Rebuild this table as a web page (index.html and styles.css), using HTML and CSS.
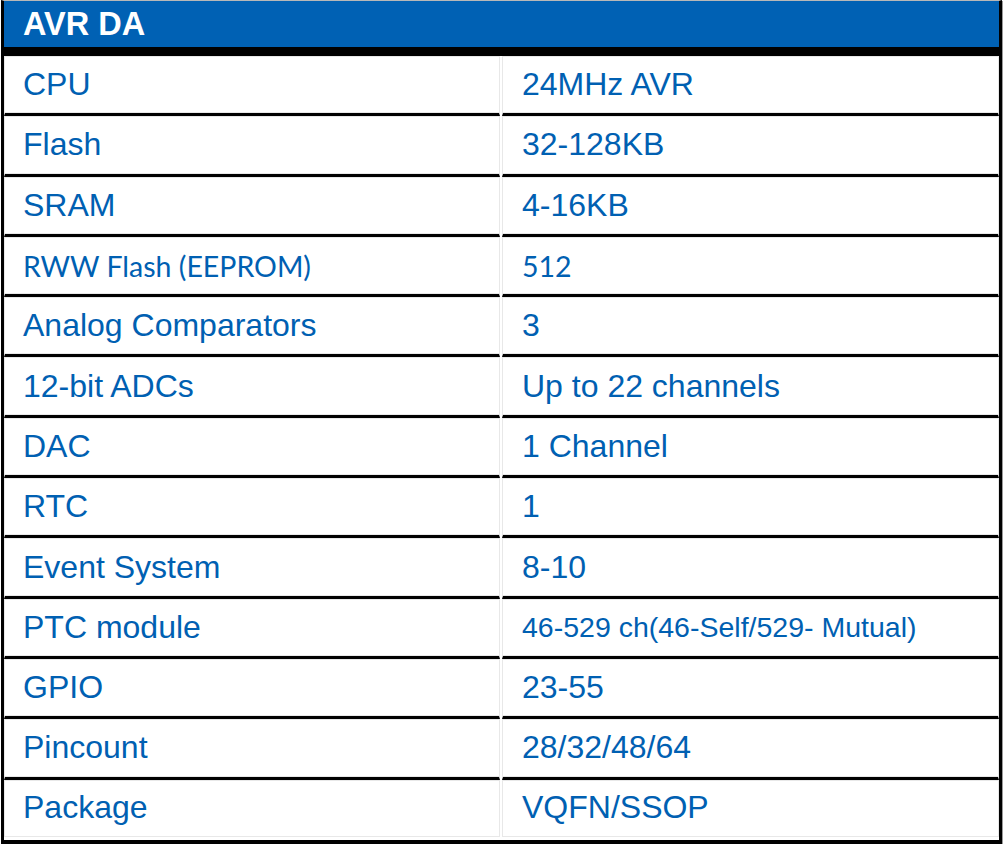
FILE: index.html
```html
<!DOCTYPE html>
<html>
<head>
<meta charset="utf-8">
<link rel="stylesheet" href="styles.css">
</head>
<body>
<div class="sheet">
  <div class="head"><span class="head-title">AVR DA</span></div>
  <div class="rows">
    <div class="row"><div class="cell">CPU</div><div class="cell">24MHz AVR</div></div>
    <div class="row"><div class="cell">Flash</div><div class="cell">32-128KB</div></div>
    <div class="row"><div class="cell">SRAM</div><div class="cell">4-16KB</div></div>
    <div class="row"><div class="cell alt">RWW Flash (EEPROM)</div><div class="cell alt">512</div></div>
    <div class="row"><div class="cell">Analog Comparators</div><div class="cell">3</div></div>
    <div class="row"><div class="cell">12-bit ADCs</div><div class="cell">Up to 22 channels</div></div>
    <div class="row"><div class="cell">DAC</div><div class="cell">1 Channel</div></div>
    <div class="row"><div class="cell">RTC</div><div class="cell">1</div></div>
    <div class="row"><div class="cell">Event System</div><div class="cell">8-10</div></div>
    <div class="row"><div class="cell">PTC module</div><div class="cell small">46-529 ch(46-Self/529- Mutual)</div></div>
    <div class="row"><div class="cell">GPIO</div><div class="cell">23-55</div></div>
    <div class="row"><div class="cell">Pincount</div><div class="cell">28/32/48/64</div></div>
    <div class="row last"><div class="cell">Package</div><div class="cell">VQFN/SSOP</div></div>
  </div>
</div>
</body>
</html>
```

FILE: styles.css
```css
html, body {
  margin: 0;
  padding: 0;
  background: #ffffff;
}

.sheet {
  margin-left: 1px;
  width: 995px;
  border-top: 1px solid #b8b8b8;
  border-left: 3px solid #000;
  border-right: 3px solid #000;
  border-bottom: 4px solid #000;
  box-shadow: 1px 1px 0 #9a9a9a;
  font-family: "Liberation Sans", Arial, sans-serif;
}

.head {
  height: 46px;
  background: #0061b4;
  border-bottom: 9px solid #000;
  display: flex;
  align-items: center;
  padding-left: 19px;
}

.head-title {
  color: #fff;
  font-weight: bold;
  font-size: 32.5px;
  line-height: 1;
}

.rows {
  display: flex;
  flex-direction: column;
}

.row {
  display: grid;
  grid-template-columns: 496px 1fr;
  column-gap: 2px;
  height: 60.3px;
}

.cell {
  box-sizing: border-box;
  height: 100%;
  border: 1px solid #e8e8e8;
  border-bottom: 3px solid #000;
  box-shadow: inset 0 -1px 0 #e8e8e8;
  display: flex;
  align-items: center;
  padding-left: 18px;
  padding-bottom: 1px;
  color: #0060b2;
  font-size: 32px;
  white-space: nowrap;
}

.cell + .cell {
  padding-left: 19px;
}

.row.last .cell {
  border-bottom: 1px solid #e8e8e8;
  box-shadow: none;
  height: 57.3px;
}

.cell.alt {
  font-family: Lato, "Open Sans", sans-serif;
  font-size: 28.5px;
}

.cell.small {
  font-size: 28.5px;
}
```
